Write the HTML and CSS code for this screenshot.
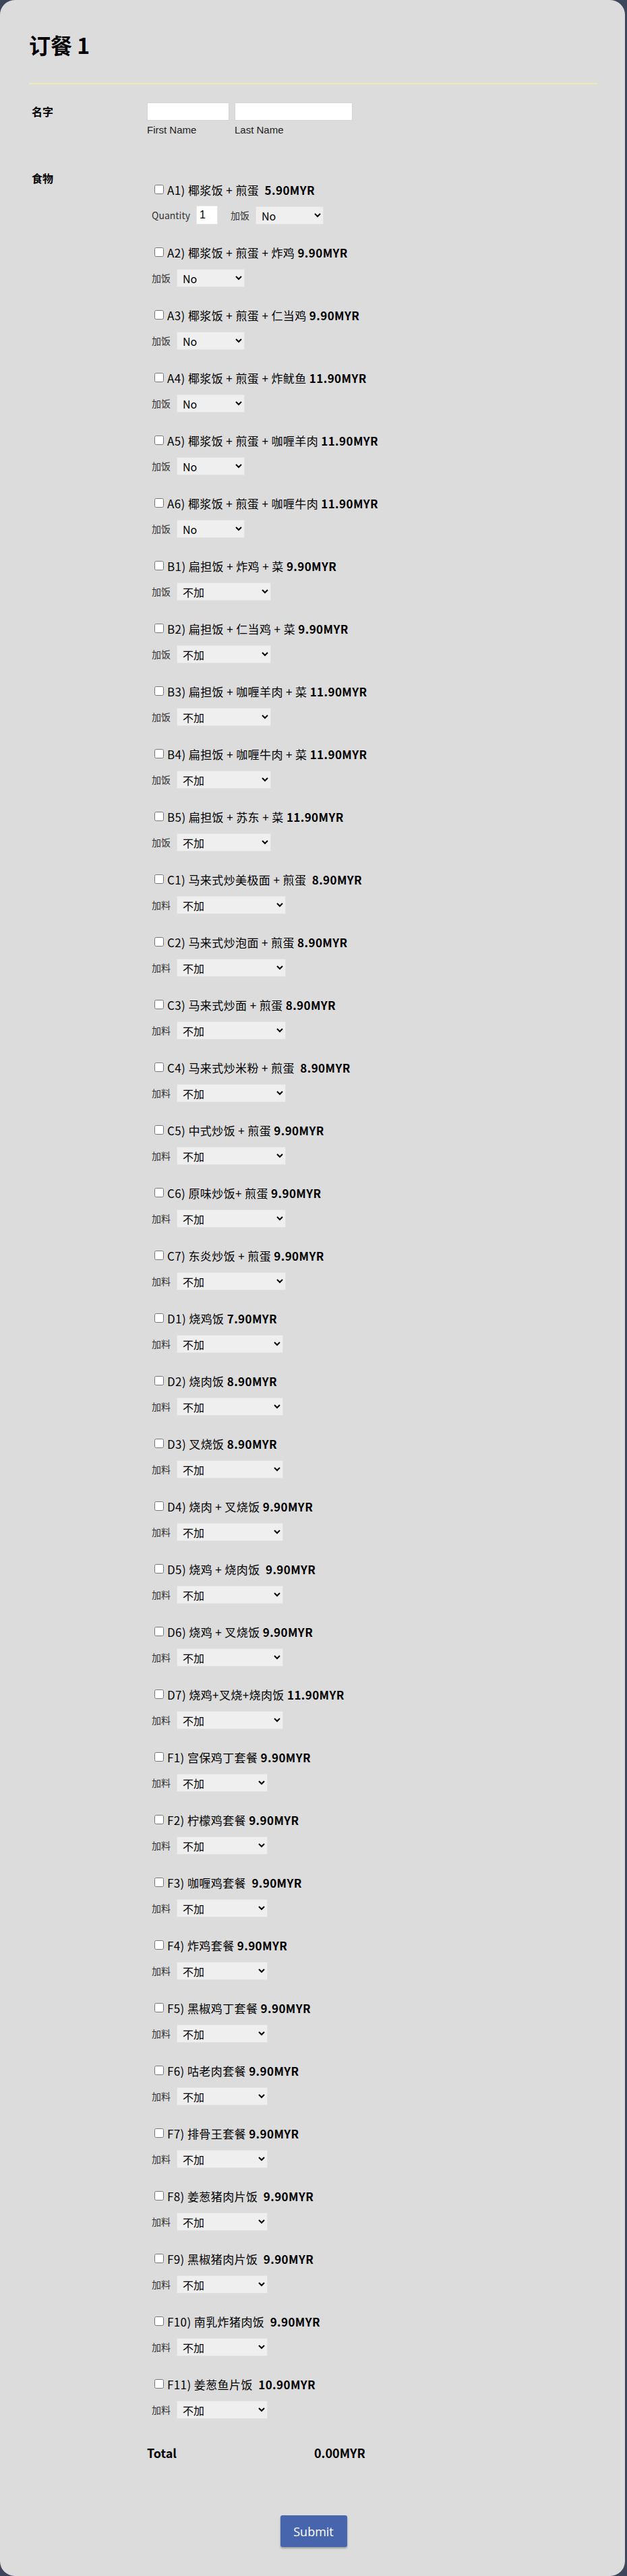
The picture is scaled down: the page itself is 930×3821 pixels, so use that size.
FILE: index.html
```html
<!DOCTYPE html>
<html lang="zh">
<head>
<meta charset="utf-8">
<title>订餐 1</title>
<link rel="stylesheet" href="styles.css">
</head>
<body>
<form class="card">
  <h1 class="title">订餐 1</h1>
  <div class="divider"></div>

  <div class="row row-name">
    <div class="row-label">名字</div>
    <div class="field name-fields">
      <div class="name-col"><input class="text-input first" type="text"><span class="sub-label">First Name</span></div>
      <div class="name-col"><input class="text-input last" type="text"><span class="sub-label">Last Name</span></div>
    </div>
  </div>

  <div class="row row-food">
    <div class="row-label food-label">食物</div>
    <div class="field items">

      <div class="item">
        <label class="item-line"><input type="checkbox" class="check"><span>A1) 椰浆饭 + 煎蛋&nbsp; <b>5.90MYR</b></span></label>
        <div class="item-opts"><span class="opt-label">Quantity</span><input class="qty" type="text" value="1"><span class="opt-label">加饭</span><select class="sel sel-a"><option>No</option></select></div>
      </div>
      <div class="item">
        <label class="item-line"><input type="checkbox" class="check"><span>A2) 椰浆饭 + 煎蛋 + 炸鸡 <b>9.90MYR</b></span></label>
        <div class="item-opts"><span class="opt-label">加饭</span><select class="sel sel-a"><option>No</option></select></div>
      </div>
      <div class="item">
        <label class="item-line"><input type="checkbox" class="check"><span>A3) 椰浆饭 + 煎蛋 + 仁当鸡 <b>9.90MYR</b></span></label>
        <div class="item-opts"><span class="opt-label">加饭</span><select class="sel sel-a"><option>No</option></select></div>
      </div>
      <div class="item">
        <label class="item-line"><input type="checkbox" class="check"><span>A4) 椰浆饭 + 煎蛋 + 炸鱿鱼 <b>11.90MYR</b></span></label>
        <div class="item-opts"><span class="opt-label">加饭</span><select class="sel sel-a"><option>No</option></select></div>
      </div>
      <div class="item">
        <label class="item-line"><input type="checkbox" class="check"><span>A5) 椰浆饭 + 煎蛋 + 咖喱羊肉 <b>11.90MYR</b></span></label>
        <div class="item-opts"><span class="opt-label">加饭</span><select class="sel sel-a"><option>No</option></select></div>
      </div>
      <div class="item">
        <label class="item-line"><input type="checkbox" class="check"><span>A6) 椰浆饭 + 煎蛋 + 咖喱牛肉 <b>11.90MYR</b></span></label>
        <div class="item-opts"><span class="opt-label">加饭</span><select class="sel sel-a"><option>No</option></select></div>
      </div>

      <div class="item">
        <label class="item-line"><input type="checkbox" class="check"><span>B1) 扁担饭 + 炸鸡 + 菜 <b>9.90MYR</b></span></label>
        <div class="item-opts"><span class="opt-label">加饭</span><select class="sel sel-b"><option>不加</option></select></div>
      </div>
      <div class="item">
        <label class="item-line"><input type="checkbox" class="check"><span>B2) 扁担饭 + 仁当鸡 + 菜 <b>9.90MYR</b></span></label>
        <div class="item-opts"><span class="opt-label">加饭</span><select class="sel sel-b"><option>不加</option></select></div>
      </div>
      <div class="item">
        <label class="item-line"><input type="checkbox" class="check"><span>B3) 扁担饭 + 咖喱羊肉 + 菜 <b>11.90MYR</b></span></label>
        <div class="item-opts"><span class="opt-label">加饭</span><select class="sel sel-b"><option>不加</option></select></div>
      </div>
      <div class="item">
        <label class="item-line"><input type="checkbox" class="check"><span>B4) 扁担饭 + 咖喱牛肉 + 菜 <b>11.90MYR</b></span></label>
        <div class="item-opts"><span class="opt-label">加饭</span><select class="sel sel-b"><option>不加</option></select></div>
      </div>
      <div class="item">
        <label class="item-line"><input type="checkbox" class="check"><span>B5) 扁担饭 + 苏东 + 菜 <b>11.90MYR</b></span></label>
        <div class="item-opts"><span class="opt-label">加饭</span><select class="sel sel-b"><option>不加</option></select></div>
      </div>

      <div class="item">
        <label class="item-line"><input type="checkbox" class="check"><span>C1) 马来式炒美极面 + 煎蛋&nbsp; <b>8.90MYR</b></span></label>
        <div class="item-opts"><span class="opt-label">加料</span><select class="sel sel-c"><option>不加</option></select></div>
      </div>
      <div class="item">
        <label class="item-line"><input type="checkbox" class="check"><span>C2) 马来式炒泡面 + 煎蛋 <b>8.90MYR</b></span></label>
        <div class="item-opts"><span class="opt-label">加料</span><select class="sel sel-c"><option>不加</option></select></div>
      </div>
      <div class="item">
        <label class="item-line"><input type="checkbox" class="check"><span>C3) 马来式炒面 + 煎蛋 <b>8.90MYR</b></span></label>
        <div class="item-opts"><span class="opt-label">加料</span><select class="sel sel-c"><option>不加</option></select></div>
      </div>
      <div class="item">
        <label class="item-line"><input type="checkbox" class="check"><span>C4) 马来式炒米粉 + 煎蛋&nbsp; <b>8.90MYR</b></span></label>
        <div class="item-opts"><span class="opt-label">加料</span><select class="sel sel-c"><option>不加</option></select></div>
      </div>
      <div class="item">
        <label class="item-line"><input type="checkbox" class="check"><span>C5) 中式炒饭 + 煎蛋 <b>9.90MYR</b></span></label>
        <div class="item-opts"><span class="opt-label">加料</span><select class="sel sel-c"><option>不加</option></select></div>
      </div>
      <div class="item">
        <label class="item-line"><input type="checkbox" class="check"><span>C6) 原味炒饭+ 煎蛋 <b>9.90MYR</b></span></label>
        <div class="item-opts"><span class="opt-label">加料</span><select class="sel sel-c"><option>不加</option></select></div>
      </div>
      <div class="item">
        <label class="item-line"><input type="checkbox" class="check"><span>C7) 东炎炒饭 + 煎蛋 <b>9.90MYR</b></span></label>
        <div class="item-opts"><span class="opt-label">加料</span><select class="sel sel-c"><option>不加</option></select></div>
      </div>

      <div class="item">
        <label class="item-line"><input type="checkbox" class="check"><span>D1) 烧鸡饭 <b>7.90MYR</b></span></label>
        <div class="item-opts"><span class="opt-label">加料</span><select class="sel sel-d"><option>不加</option></select></div>
      </div>
      <div class="item">
        <label class="item-line"><input type="checkbox" class="check"><span>D2) 烧肉饭 <b>8.90MYR</b></span></label>
        <div class="item-opts"><span class="opt-label">加料</span><select class="sel sel-d"><option>不加</option></select></div>
      </div>
      <div class="item">
        <label class="item-line"><input type="checkbox" class="check"><span>D3) 叉烧饭 <b>8.90MYR</b></span></label>
        <div class="item-opts"><span class="opt-label">加料</span><select class="sel sel-d"><option>不加</option></select></div>
      </div>
      <div class="item">
        <label class="item-line"><input type="checkbox" class="check"><span>D4) 烧肉 + 叉烧饭 <b>9.90MYR</b></span></label>
        <div class="item-opts"><span class="opt-label">加料</span><select class="sel sel-d"><option>不加</option></select></div>
      </div>
      <div class="item">
        <label class="item-line"><input type="checkbox" class="check"><span>D5) 烧鸡 + 烧肉饭&nbsp; <b>9.90MYR</b></span></label>
        <div class="item-opts"><span class="opt-label">加料</span><select class="sel sel-d"><option>不加</option></select></div>
      </div>
      <div class="item">
        <label class="item-line"><input type="checkbox" class="check"><span>D6) 烧鸡 + 叉烧饭 <b>9.90MYR</b></span></label>
        <div class="item-opts"><span class="opt-label">加料</span><select class="sel sel-d"><option>不加</option></select></div>
      </div>
      <div class="item">
        <label class="item-line"><input type="checkbox" class="check"><span>D7) 烧鸡+叉烧+烧肉饭 <b>11.90MYR</b></span></label>
        <div class="item-opts"><span class="opt-label">加料</span><select class="sel sel-d"><option>不加</option></select></div>
      </div>

      <div class="item">
        <label class="item-line"><input type="checkbox" class="check"><span>F1) 宫保鸡丁套餐 <b>9.90MYR</b></span></label>
        <div class="item-opts"><span class="opt-label">加料</span><select class="sel sel-f"><option>不加</option></select></div>
      </div>
      <div class="item">
        <label class="item-line"><input type="checkbox" class="check"><span>F2) 柠檬鸡套餐 <b>9.90MYR</b></span></label>
        <div class="item-opts"><span class="opt-label">加料</span><select class="sel sel-f"><option>不加</option></select></div>
      </div>
      <div class="item">
        <label class="item-line"><input type="checkbox" class="check"><span>F3) 咖喱鸡套餐&nbsp; <b>9.90MYR</b></span></label>
        <div class="item-opts"><span class="opt-label">加料</span><select class="sel sel-f"><option>不加</option></select></div>
      </div>
      <div class="item">
        <label class="item-line"><input type="checkbox" class="check"><span>F4) 炸鸡套餐 <b>9.90MYR</b></span></label>
        <div class="item-opts"><span class="opt-label">加料</span><select class="sel sel-f"><option>不加</option></select></div>
      </div>
      <div class="item">
        <label class="item-line"><input type="checkbox" class="check"><span>F5) 黑椒鸡丁套餐 <b>9.90MYR</b></span></label>
        <div class="item-opts"><span class="opt-label">加料</span><select class="sel sel-f"><option>不加</option></select></div>
      </div>
      <div class="item">
        <label class="item-line"><input type="checkbox" class="check"><span>F6) 咕老肉套餐 <b>9.90MYR</b></span></label>
        <div class="item-opts"><span class="opt-label">加料</span><select class="sel sel-f"><option>不加</option></select></div>
      </div>
      <div class="item">
        <label class="item-line"><input type="checkbox" class="check"><span>F7) 排骨王套餐 <b>9.90MYR</b></span></label>
        <div class="item-opts"><span class="opt-label">加料</span><select class="sel sel-f"><option>不加</option></select></div>
      </div>
      <div class="item">
        <label class="item-line"><input type="checkbox" class="check"><span>F8) 姜葱猪肉片饭&nbsp; <b>9.90MYR</b></span></label>
        <div class="item-opts"><span class="opt-label">加料</span><select class="sel sel-f"><option>不加</option></select></div>
      </div>
      <div class="item">
        <label class="item-line"><input type="checkbox" class="check"><span>F9) 黑椒猪肉片饭&nbsp; <b>9.90MYR</b></span></label>
        <div class="item-opts"><span class="opt-label">加料</span><select class="sel sel-f"><option>不加</option></select></div>
      </div>
      <div class="item">
        <label class="item-line"><input type="checkbox" class="check"><span>F10) 南乳炸猪肉饭&nbsp; <b>9.90MYR</b></span></label>
        <div class="item-opts"><span class="opt-label">加料</span><select class="sel sel-f"><option>不加</option></select></div>
      </div>
      <div class="item">
        <label class="item-line"><input type="checkbox" class="check"><span>F11) 姜葱鱼片饭&nbsp; <b>10.90MYR</b></span></label>
        <div class="item-opts"><span class="opt-label">加料</span><select class="sel sel-f"><option>不加</option></select></div>
      </div>

    </div>
  </div>

  <div class="row row-total">
    <div class="row-label"></div>
    <div class="field total">
      <span class="total-label">Total</span>
      <span class="total-value">0.00MYR</span>
    </div>
  </div>

  <div class="submit-row">
    <button class="submit" type="button">Submit</button>
  </div>
</form>
</body>
</html>
```

FILE: styles.css
```css
* {
  box-sizing: border-box;
}

html,
body {
  margin: 0;
}

body {
  background: #3d465a;
  font-family: "Noto Sans CJK SC", "Noto Sans", sans-serif;
  color: #111;
}

.card {
  width: calc(100% - 3px);
  background: #dcdcdc;
  border-radius: 22px;
  padding: 46px 40px 43px 43px;
}

.title {
  margin: 0;
  font-size: 32px;
  line-height: 40px;
  font-weight: 700;
  color: #000;
}

.divider {
  margin-top: 37px;
  height: 2px;
  background: #f2e9b2;
}

.row {
  display: flex;
  padding-left: 4px;
}

.row-label {
  width: 171px;
  flex: none;
  font-size: 16px;
  font-weight: 700;
  line-height: 27px;
  color: #000;
}

.field {
  flex: 1;
}

.row-name {
  margin-top: 27px;
}

.name-fields {
  display: flex;
  gap: 8px;
}

.name-col {
  display: flex;
  flex-direction: column;
}

.text-input {
  height: 27px;
  border: 1px solid #d4d4d4;
  background: #fff;
  padding: 0 4px;
  font-size: 15px;
}

.text-input.first {
  width: 122px;
}

.text-input.last {
  width: 175px;
}

.sub-label {
  margin-top: 5px;
  font-family: "Liberation Sans", "Noto Sans", sans-serif;
  font-size: 15px;
  line-height: 18px;
  color: #222;
}

.row-food {
  margin-top: 51px;
}

.food-label {
  line-height: 22px;
}

.items {
  padding-top: 17px;
}

.item-line {
  display: flex;
  align-items: center;
  height: 22px;
  padding-left: 11px;
  font-size: 17px;
  letter-spacing: 0.4px;
  color: #000;
  white-space: nowrap;
}

.item-line b {
  font-weight: 700;
}

.check {
  width: 14px;
  height: 14px;
  margin: 0 5px 0 0;
  flex: none;
}

.item-opts {
  display: flex;
  align-items: center;
  height: 28px;
  margin-top: 13px;
  margin-bottom: 30px;
  padding-left: 7px;
}

.opt-label {
  font-size: 14px;
  color: #333;
  margin-right: 9px;
}

.qty {
  width: 32px;
  height: 28px;
  border: 1px solid #e6e6e6;
  background: #fff;
  font-size: 16px;
  padding: 0 4px;
  margin-right: 19px;
  color: #000;
}

.sel {
  height: 27px;
  font-family: "Noto Sans CJK SC", "Noto Sans", sans-serif;
  font-size: 16px;
  background-color: #efefef;
  border: 1px solid #e2e2e2;
  border-radius: 0;
  padding: 0 4px;
  color: #000;
}

.sel-a {
  width: 101px;
}

.sel-b {
  width: 140px;
}

.sel-c {
  width: 162px;
}

.sel-d {
  width: 158px;
}

.sel-f {
  width: 135px;
}

.row-total {
  margin-top: 8px;
}

.total {
  display: flex;
  font-size: 18px;
  font-weight: 700;
  line-height: 24px;
  color: #000;
}

.total-label {
  width: 248px;
}

.submit-row {
  margin-top: 81px;
  text-align: center;
}

.submit {
  width: 99px;
  height: 47px;
  background: #4665ad;
  color: #fff;
  border: 0;
  border-radius: 3px;
  font-family: "Open Sans", "Noto Sans", sans-serif;
  font-size: 18px;
  box-shadow: 0 2px 3px rgba(0, 0, 0, 0.3);
}
```
